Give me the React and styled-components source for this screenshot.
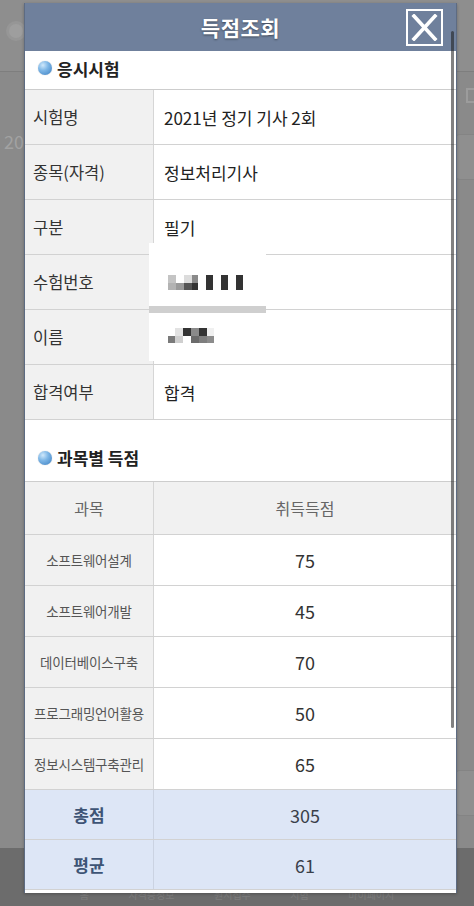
import React from 'react';
import styled, { createGlobalStyle } from 'styled-components';

const GlobalStyle = createGlobalStyle`
  html, body {
    margin: 0;
    padding: 0;
    width: 474px;
    height: 906px;
    overflow: hidden;
    background: #8a8a8a;
    font-family: 'Noto Sans CJK KR', 'Noto Sans', sans-serif;
  }
  * { box-sizing: border-box; }
`;

const info = [
  { label: '시험명', value: '2021년 정기 기사 2회' },
  { label: '종목(자격)', value: '정보처리기사' },
  { label: '구분', value: '필기' },
  { label: '수험번호', value: '' },
  { label: '이름', value: '' },
  { label: '합격여부', value: '합격' },
];

const scores = [
  { name: '소프트웨어설계', score: 75 },
  { name: '소프트웨어개발', score: 45 },
  { name: '데이터베이스구축', score: 70 },
  { name: '프로그래밍언어활용', score: 50 },
  { name: '정보시스템구축관리', score: 65 },
];

const App = () => {
  return (
    <>
      <GlobalStyle />
      <Page>
        <BgHeader>
          <BgIcon />
        </BgHeader>
        <BgBody>
          <BgYear>2021</BgYear>
          <BgMore />
          <BgCard />
        </BgBody>
        <BgLower>
          <BgCard />
        </BgLower>
        <BgTabs>
          {['홈', '자격증정보', '원서접수', '시험', '마이페이지'].map((t) => (
            <BgTab key={t}>{t}</BgTab>
          ))}
        </BgTabs>
      </Page>

      <Modal>
        <ModalHeader>
          <Title>득점조회</Title>
          <CloseButton aria-label="닫기">
            <svg width="27" height="27" viewBox="0 0 27 27">
              <path d="M3 2 L24 25 M24 2 L3 25" stroke="#fff" strokeWidth="3.6" strokeLinecap="square" />
            </svg>
          </CloseButton>
        </ModalHeader>

        <ModalBody>
          <SectionTitle $first>
            <Bullet />
            응시시험
          </SectionTitle>
          <InfoTable>
            {info.map((row) => (
              <InfoRow key={row.label}>
                <LabelCell>{row.label}</LabelCell>
                <ValueCell>{row.value}</ValueCell>
              </InfoRow>
            ))}
            <Redaction>
              <svg width="117" height="118" viewBox="0 0 117 118">
                <rect x="19" y="32" width="8" height="8" fill="#c4c4c4" />
                <rect x="19" y="40" width="8" height="7" fill="#b3b3b3" />
                <rect x="27" y="40" width="8" height="7" fill="#9a9a9a" />
                <rect x="35" y="32" width="8" height="8" fill="#dcdcdc" />
                <rect x="35" y="40" width="8" height="7" fill="#555" />
                <rect x="43" y="32" width="6" height="8" fill="#8a8a8a" />
                <rect x="43" y="40" width="6" height="7" fill="#333" />
                <rect x="57" y="32" width="7" height="15" fill="#333" />
                <rect x="72" y="32" width="7" height="15" fill="#333" />
                <rect x="87" y="32" width="7" height="15" fill="#333" />
                <rect x="0" y="63" width="117" height="7" fill="#cfcfcf" />
                <rect x="19" y="93" width="7" height="7" fill="#7a7a7a" />
                <rect x="26" y="85" width="8" height="8" fill="#e2e2e2" />
                <rect x="26" y="93" width="8" height="7" fill="#cfcfcf" />
                <rect x="34" y="85" width="8" height="8" fill="#333" />
                <rect x="42" y="85" width="8" height="8" fill="#8a8a8a" />
                <rect x="42" y="93" width="8" height="7" fill="#6b6b6b" />
                <rect x="50" y="85" width="8" height="8" fill="#333" />
                <rect x="50" y="93" width="8" height="7" fill="#7e7e7e" />
                <rect x="58" y="85" width="7" height="8" fill="#f0f0f0" />
                <rect x="58" y="93" width="7" height="7" fill="#8c8c8c" />
              </svg>
            </Redaction>
          </InfoTable>

          <SectionTitle>
            <Bullet />
            과목별 득점
          </SectionTitle>
          <ScoreTable>
            <ScoreRow $height={53}>
              <HeadCell>과목</HeadCell>
              <HeadCell $wide>취득득점</HeadCell>
            </ScoreRow>
            {scores.map((s) => (
              <ScoreRow key={s.name} $height={51}>
                <SubjectCell>{s.name}</SubjectCell>
                <ScoreCell>{s.score}</ScoreCell>
              </ScoreRow>
            ))}
            <ScoreRow $height={50} $total>
              <TotalLabel>총점</TotalLabel>
              <ScoreCell $total>305</ScoreCell>
            </ScoreRow>
            <ScoreRow $height={50} $total>
              <TotalLabel>평균</TotalLabel>
              <ScoreCell $total>61</ScoreCell>
            </ScoreRow>
          </ScoreTable>
        </ModalBody>
        <ScrollThumb />
      </Modal>
    </>
  );
};

const Page = styled.div`
  width: 474px;
  height: 906px;
  display: flex;
  flex-direction: column;
  background: #8a8a8a;
`;

const BgHeader = styled.div`
  height: 72px;
  background: #8e8e8e;
  border-bottom: 1px solid #7e7e7e;
  display: flex;
  align-items: center;
  padding: 0 6px;
`;

const BgIcon = styled.div`
  width: 20px;
  height: 20px;
  margin-top: -10px;
  border-radius: 50%;
  background: #9e9e9e;
  border: 3px solid #969696;
`;

const BgBody = styled.div`
  flex: 1;
  position: relative;
  display: flex;
  flex-direction: column;
  padding: 12px 0 0 4px;
`;

const BgYear = styled.div`
  margin-top: 44px;
  font-size: 18px;
  color: #a2a2a2;
`;

const BgMore = styled.div`
  position: absolute;
  right: 0;
  top: 16px;
  width: 8px;
  height: 15px;
  border-left: 2px solid #9c9c9c;
  border-top: 2px solid #9c9c9c;
  border-bottom: 2px solid #9c9c9c;
`;

const BgCard = styled.div`
  align-self: flex-end;
  width: 20px;
  height: 46px;
  margin-top: -20px;
  border-radius: 6px 0 0 6px;
  background: #8f8f8f;
  border: 1px solid #848484;
  border-right: none;
`;

const BgLower = styled.div`
  height: 80px;
  display: flex;
  flex-direction: column;
  padding-top: 22px;
`;

const BgTabs = styled.div`
  height: 58px;
  background: #6c6c6c;
  display: flex;
  justify-content: space-around;
  align-items: flex-end;
  padding: 0 60px 4px;
`;

const BgTab = styled.div`
  font-size: 10px;
  color: #7c7c7c;
`;

const Modal = styled.div`
  position: absolute;
  top: 3px;
  left: 24px;
  width: 433px;
  background: #fff;
  border-left: 1px solid #5d6b82;
  border-right: 1px solid #5d6b82;
  padding-bottom: 3px;
  box-shadow: 0 1px 3px rgba(0, 0, 0, 0.25);
`;

const ModalHeader = styled.div`
  height: 48px;
  background: #6f809c;
  display: flex;
  align-items: center;
  justify-content: center;
  position: relative;
`;

const Title = styled.h1`
  margin: 0;
  font-size: 21px;
  font-weight: 700;
  color: #fff;
  letter-spacing: 0.5px;
  text-shadow: 0 1px 2px rgba(0, 0, 0, 0.45);
`;

const CloseButton = styled.button`
  position: absolute;
  right: 13px;
  top: 6px;
  width: 37px;
  height: 37px;
  padding: 0;
  border: 2px solid #fff;
  background: transparent;
  display: flex;
  align-items: center;
  justify-content: center;
`;

const ModalBody = styled.div`
  display: flex;
  flex-direction: column;
`;

const SectionTitle = styled.h2`
  margin: 0;
  height: ${(p) => (p.$first ? '38px' : '61px')};
  padding: ${(p) => (p.$first ? '0 0 4px 13px' : '14px 0 0 13px')};
  display: flex;
  align-items: center;
  gap: 5px;
  font-size: 17px;
  font-weight: 700;
  color: #222;
`;

const Bullet = styled.span`
  width: 14px;
  height: 14px;
  border-radius: 50%;
  background: radial-gradient(circle at 35% 30%, #cfe8fb 0%, #7db6e6 40%, #3a7cc0 100%);
  box-shadow: 0 0 1px rgba(0, 0, 0, 0.3);
`;

const InfoTable = styled.div`
  position: relative;
  border-top: 1px solid #cdcdcd;
  display: flex;
  flex-direction: column;
`;

const InfoRow = styled.div`
  height: 55px;
  display: grid;
  grid-template-columns: 129px 1fr;
  border-bottom: 1px solid #d2d2d2;
`;

const LabelCell = styled.div`
  background: #f1f1f1;
  border-right: 1px solid #d6d6d6;
  display: flex;
  align-items: center;
  padding-left: 8px;
  font-size: 16.5px;
  color: #333;
`;

const ValueCell = styled.div`
  display: flex;
  align-items: center;
  padding-left: 10px;
  font-size: 17px;
  color: #222;
`;

const Redaction = styled.div`
  position: absolute;
  left: 124px;
  top: 153px;
  width: 117px;
  height: 118px;
  background: #fff;
  svg { display: block; }
`;

const ScoreTable = styled.div`
  border-top: 1px solid #cdcdcd;
  display: flex;
  flex-direction: column;
`;

const ScoreRow = styled.div`
  height: ${(p) => p.$height}px;
  display: grid;
  grid-template-columns: 129px 1fr;
  border-bottom: 1px solid #d2d2d2;
  background: ${(p) => (p.$total ? '#dde6f6' : '#fff')};
`;

const HeadCell = styled.div`
  background: #f1f1f1;
  border-right: ${(p) => (p.$wide ? 'none' : '1px solid #d6d6d6')};
  display: flex;
  align-items: center;
  justify-content: center;
  font-size: 16px;
  color: #666;
`;

const SubjectCell = styled.div`
  background: #f1f1f1;
  border-right: 1px solid #d6d6d6;
  display: flex;
  align-items: center;
  justify-content: center;
  font-size: 13.5px;
  letter-spacing: -0.2px;
  color: #555;
  white-space: nowrap;
`;

const TotalLabel = styled.div`
  border-right: 1px solid #cbd3e2;
  display: flex;
  align-items: center;
  justify-content: center;
  font-size: 17px;
  font-weight: 700;
  color: #3e5475;
`;

const ScoreCell = styled.div`
  display: flex;
  align-items: center;
  justify-content: center;
  font-size: 18px;
  color: ${(p) => (p.$total ? '#3a3f4a' : '#333')};
`;

const ScrollThumb = styled.div`
  position: absolute;
  right: 2px;
  top: 28px;
  width: 3px;
  height: 697px;
  border-radius: 2px;
  background: rgba(25, 25, 25, 0.55);
`;

export default App;
